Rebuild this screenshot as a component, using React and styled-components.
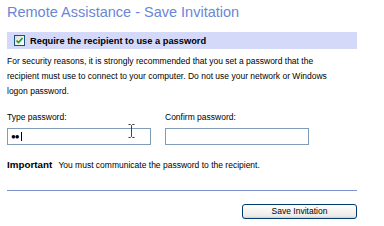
import React from "react";
import styled, { createGlobalStyle } from "styled-components";

const GlobalStyle = createGlobalStyle`
  html, body {
    margin: 0;
    padding: 0;
    background: #ffffff;
  }
  body {
    font-family: "Liberation Sans", Arial, sans-serif;
  }
`;

const Page = styled.div`
  width: 384px;
  height: 226px;
  box-sizing: border-box;
  padding: 3px 27px 0 7px;
  color: #000;
  font-size: 8.5px;
  overflow: hidden;
`;

const Title = styled.h1`
  margin: 0;
  font-size: 14.5px;
  font-weight: normal;
  color: #6b86d6;
  line-height: 18px;
`;

const OptionBand = styled.label`
  display: flex;
  align-items: center;
  gap: 5px;
  margin-top: 11px;
  height: 17px;
  padding-left: 7px;
  background: #d5d9f9;
  font-weight: bold;
  font-size: 9.3px;
`;

const CheckBox = styled.span`
  width: 9px;
  height: 9px;
  border: 1px solid #1c5180;
  background: linear-gradient(135deg, #dcdcd6, #ffffff);
  display: flex;
  align-items: center;
  justify-content: center;
`;

const Paragraph = styled.p`
  margin: 5px 0 0 0;
  line-height: 15px;
`;

const Fields = styled.div`
  display: flex;
  gap: 14px;
  margin-top: 13px;
`;

const Field = styled.div`
  display: flex;
  flex-direction: column;
  gap: 6px;
  line-height: 10px;
  position: relative;
`;

const Input = styled.div`
  box-sizing: border-box;
  width: 144px;
  height: 17px;
  border: 1px solid #7f9db9;
  background: #fff;
  display: flex;
  align-items: center;
  padding-left: 3px;
  font-size: 8px;
  letter-spacing: -1px;
`;

const Caret = styled.span`
  width: 1px;
  height: 9px;
  background: #000;
  margin-left: 2px;
`;

const Cursor = styled.svg`
  position: absolute;
  left: 121px;
  top: 12px;
`;

const Notice = styled.p`
  margin: 14px 0 0 0;
  line-height: 12px;
`;

const Strong = styled.b`
  font-size: 9.8px;
  margin-right: 4px;
`;

const Rule = styled.hr`
  margin: 19px 0 0 0;
  border: none;
  border-top: 1px solid #7b93cf;
  height: 0;
`;

const Footer = styled.div`
  display: flex;
  justify-content: flex-end;
  margin-top: 13px;
`;

const Button = styled.button`
  width: 115px;
  height: 15px;
  padding: 0;
  border: 1px solid #003c74;
  border-radius: 3px;
  background: linear-gradient(#ffffff, #ecebe6 85%, #d6d0c5);
  font-family: "Liberation Sans", Arial, sans-serif;
  font-size: 8.5px;
  line-height: 13px;
  color: #000;
`;

export default function App() {
  return (
    <>
      <GlobalStyle />
      <Page>
        <Title>Remote Assistance - Save Invitation</Title>
        <OptionBand>
          <CheckBox>
            <svg width="7" height="7" viewBox="0 0 7 7">
              <path d="M0.5 3.5 L2.5 5.5 L6.5 1" stroke="#21a121" strokeWidth="1.6" fill="none" />
            </svg>
          </CheckBox>
          Require the recipient to use a password
        </OptionBand>
        <Paragraph>
          For security reasons, it is strongly recommended that you set a password that the
          <br />
          recipient must use to connect to your computer. Do not use your network or Windows
          <br />
          logon password.
        </Paragraph>
        <Fields>
          <Field>
            Type password:
            <Input>
              ●●<Caret />
            </Input>
            <Cursor width="7" height="14" viewBox="0 0 7 14">
              <path d="M0.5 0.5 H2.5 L3.5 1.5 L4.5 0.5 H6.5 M3.5 1.5 V12.5 M0.5 13.5 H2.5 L3.5 12.5 L4.5 13.5 H6.5"
                stroke="#444" strokeWidth="1" fill="none" />
            </Cursor>
          </Field>
          <Field>
            Confirm password:
            <Input />
          </Field>
        </Fields>
        <Notice>
          <Strong>Important</Strong> You must communicate the password to the recipient.
        </Notice>
        <Rule />
        <Footer>
          <Button>Save Invitation</Button>
        </Footer>
      </Page>
    </>
  );
}
